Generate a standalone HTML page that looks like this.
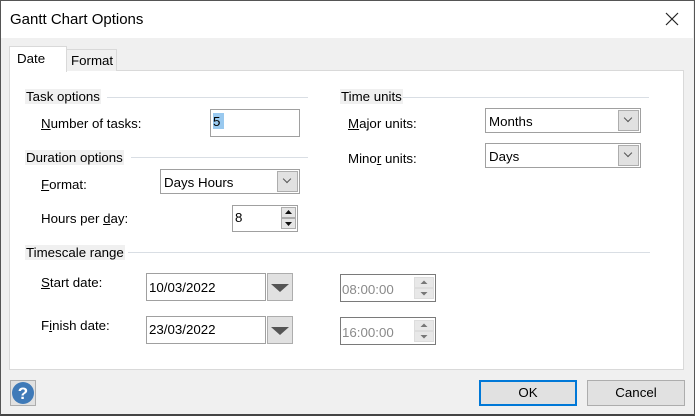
<!DOCTYPE html>
<html><head><style>
*{margin:0;padding:0;box-sizing:border-box}
body{width:695px;height:416px;overflow:hidden;background:#fff;font-family:"Liberation Sans",sans-serif;font-size:12px;color:#000;position:relative}
.a{position:absolute}
.win{left:0;top:0;width:695px;height:416px;border:1px solid #555;border-bottom:2px solid #444;background:#f0f0f0}
.title{left:1px;top:1px;width:692px;height:37px;background:#fff}
.lbl{position:absolute;white-space:nowrap;font-size:13.3px}
.grp{position:absolute;background:#f0f0f0;font-size:13.3px;padding:0 1px;height:15px;line-height:15px}
.line{position:absolute;height:1px;background:#d9dee4}
.box{position:absolute;background:#fff;border:1px solid #a0a0a0}
.dd{position:absolute;background:#e1e1e1;border:1px solid #adadad}
.chev{position:absolute;width:6px;height:6px;border-right:1px solid #555;border-bottom:1px solid #555;transform:rotate(45deg)}
.tri{position:absolute;width:0;height:0;border-left:9px solid transparent;border-right:9px solid transparent;border-top:8px solid #555}
u{text-decoration:underline}
.btn{position:absolute;background:#e1e1e1;border:1px solid #adadad;text-align:center;line-height:23px;font-size:13.3px}
</style></head><body>
<div class="a win"></div>
<div class="a title"></div>
<div class="lbl" style="left:10px;top:11px;font-size:15px">Gantt Chart Options</div>
<svg class="a" style="left:665px;top:12px" width="14" height="14"><path d="M1 1L13 13M13 1L1 13" stroke="#222" stroke-width="1.2"/></svg>
<div class="a" style="left:9px;top:70px;width:675px;height:300px;background:#fff;border:1px solid #d9d9d9"></div>
<div class="a" style="left:66px;top:49px;width:51px;height:22px;background:#f0f0f0;border:1px solid #d9d9d9;border-bottom:none"></div>
<div class="lbl" style="left:71px;top:53px">Format</div>
<div class="a" style="left:9px;top:46px;width:58px;height:26px;background:#fff;border:1px solid #d9d9d9;border-bottom:none"></div>
<div class="lbl" style="left:17px;top:51px">Date</div>

<div class="grp" style="left:25px;top:89px">Task options</div>
<div class="line" style="left:107px;top:97px;width:201px"></div>
<div class="lbl" style="left:41px;top:116px"><u>N</u>umber of tasks:</div>
<div class="box" style="left:210px;top:109px;width:90px;height:28px"></div>
<div class="a" style="left:213px;top:113px;width:11px;height:16px;background:#99c9ef"></div>
<div class="lbl" style="left:213px;top:114px">5</div>

<div class="grp" style="left:25px;top:150px">Duration options</div>
<div class="line" style="left:131px;top:157px;width:177px"></div>
<div class="lbl" style="left:41px;top:177px"><u>F</u>ormat:</div>
<div class="box" style="left:160px;top:169px;width:140px;height:25px"></div>
<div class="lbl" style="left:164px;top:175px">Days Hours</div>
<div class="dd" style="left:277px;top:171px;width:21px;height:21px"></div>
<div class="chev" style="left:284px;top:176px"></div>
<div class="lbl" style="left:41px;top:211px">Hours per <u>d</u>ay:</div>
<div class="box" style="left:232px;top:205px;width:66px;height:27px"></div>
<div class="lbl" style="left:235px;top:210px">8</div>
<div class="dd" style="left:281px;top:207px;width:15px;height:11px;background:#e6e6e6"></div>
<div class="dd" style="left:281px;top:218px;width:15px;height:11px;background:#e6e6e6"></div>
<svg class="a" style="left:281px;top:207px" width="15" height="22"><path d="M4 7L7.5 3L11 7Z M4 15L7.5 19L11 15Z" fill="#111"/></svg>

<div class="grp" style="left:340px;top:89px">Time units</div>
<div class="line" style="left:403px;top:97px;width:246px"></div>
<div class="lbl" style="left:348px;top:116px"><u>M</u>ajor units:</div>
<div class="box" style="left:485px;top:108px;width:156px;height:25px"></div>
<div class="lbl" style="left:489px;top:114px">Months</div>
<div class="dd" style="left:618px;top:110px;width:21px;height:21px"></div>
<div class="chev" style="left:625px;top:115px"></div>
<div class="lbl" style="left:348px;top:151px">Mino<u>r</u> units:</div>
<div class="box" style="left:485px;top:143px;width:156px;height:25px"></div>
<div class="lbl" style="left:489px;top:149px">Days</div>
<div class="dd" style="left:618px;top:145px;width:21px;height:21px"></div>
<div class="chev" style="left:625px;top:150px"></div>

<div class="grp" style="left:25px;top:245px">Timescale range</div>
<div class="line" style="left:128px;top:252px;width:522px"></div>
<div class="lbl" style="left:41px;top:275px"><u>S</u>tart date:</div>
<div class="box" style="left:146px;top:273px;width:120px;height:28px"></div>
<div class="lbl" style="left:149px;top:280px">10/03/2022</div>
<div class="dd" style="left:267px;top:273px;width:26px;height:28px"></div>
<div class="tri" style="left:271px;top:284px"></div>
<div class="box" style="left:340px;top:274px;width:96px;height:28px;border-color:#7a7a7a"></div>
<div class="lbl" style="left:342px;top:282px;color:#8a8a8a">08:00:00</div>
<div class="dd" style="left:414px;top:277px;width:20px;height:11px;background:#e8e8e8;border-color:#ddd"></div>
<div class="dd" style="left:414px;top:288px;width:20px;height:11px;background:#e8e8e8;border-color:#ddd"></div>
<svg class="a" style="left:414px;top:277px" width="20" height="22"><path d="M6.5 7L10 3.5L13.5 7Z M6.5 15L10 18.5L13.5 15Z" fill="#777"/></svg>

<div class="lbl" style="left:41px;top:318px">F<u>i</u>nish date:</div>
<div class="box" style="left:146px;top:316px;width:120px;height:28px"></div>
<div class="lbl" style="left:149px;top:322px">23/03/2022</div>
<div class="dd" style="left:267px;top:316px;width:26px;height:28px"></div>
<div class="tri" style="left:271px;top:327px"></div>
<div class="box" style="left:340px;top:317px;width:96px;height:28px;border-color:#7a7a7a"></div>
<div class="lbl" style="left:342px;top:325px;color:#8a8a8a">16:00:00</div>
<div class="dd" style="left:414px;top:320px;width:20px;height:11px;background:#e8e8e8;border-color:#ddd"></div>
<div class="dd" style="left:414px;top:331px;width:20px;height:11px;background:#e8e8e8;border-color:#ddd"></div>
<svg class="a" style="left:414px;top:320px" width="20" height="22"><path d="M6.5 7L10 3.5L13.5 7Z M6.5 15L10 18.5L13.5 15Z" fill="#777"/></svg>

<div class="a" style="left:10px;top:380px;width:26px;height:26px;border:1px solid #adadad;background:#e1e1e1"></div>
<svg class="a" style="left:11px;top:381px" width="24" height="24"><circle cx="12" cy="12" r="11" fill="#3f7ab8"/><text x="12" y="18" text-anchor="middle" font-family="Liberation Sans" font-weight="bold" font-size="17" fill="#fff">?</text></svg>
<div class="btn" style="left:479px;top:380px;width:98px;height:26px;border:2px solid #0078d7;line-height:22px">OK</div>
<div class="btn" style="left:587px;top:380px;width:98px;height:26px">Cancel</div>
</body></html>
